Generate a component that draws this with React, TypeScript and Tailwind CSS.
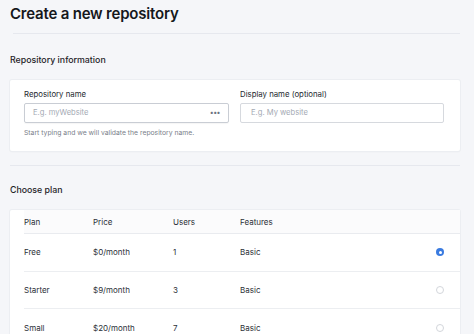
import { Fragment } from "react";

const PLANS = [
  { name: "Free", price: "$0/month", users: "1", features: "Basic", selected: true },
  { name: "Starter", price: "$9/month", users: "3", features: "Basic", selected: false },
  { name: "Small", price: "$20/month", users: "7", features: "Basic", selected: false },
];

export default function App() {
  return (
    <div
      className="min-h-[334px] w-[474px] overflow-hidden bg-[#f5f6f9] pl-[10px] pr-[14px] text-[#1f2328]"
      style={{ fontFamily: "Inter, 'Noto Sans', sans-serif" }}
    >
      <h1 className="pt-[3px] text-[15px] font-semibold leading-[22px] tracking-[-0.2px] text-[#15181c]">
        Create a new repository
      </h1>
      <div className="mt-[8px] ml-[3px] border-t border-[#e6e8ee]" />

      <h2 className="mt-[19px] text-[8.8px] font-medium leading-[14px]">Repository information</h2>

      <div className="mt-[13px] flex h-[71px] gap-[11px] rounded-[2px] bg-white pl-[14px] pr-[16px] pt-[9px] shadow-[0_0_0_1px_#eceef2,0_1px_2px_rgba(0,0,0,0.05)]">
        <div className="flex w-[205px] flex-col">
          <label className="text-[7.8px] leading-[11px] text-[#24292f]">Repository name</label>
          <div className="mt-[3px] flex h-[20px] items-center justify-between rounded-[2px] border border-[#c9cdd4] px-[8px] shadow-[0_1px_1px_rgba(0,0,0,0.04)]">
            <span className="text-[7.6px] text-[#a3a9b3]">E.g. myWebsite</span>
            <span className="text-[7px] tracking-[-0.5px] text-[#6b7280]">•••</span>
          </div>
          <p className="mt-[4.5px] text-[6.8px] leading-[10px] text-[#7a808a]">
            Start typing and we will validate the repository name.
          </p>
        </div>
        <div className="flex flex-1 flex-col">
          <label className="text-[7.8px] leading-[11px] text-[#24292f]">Display name (optional)</label>
          <div className="mt-[3px] flex h-[20px] items-center rounded-[2px] border border-[#d6d9de] px-[10px]">
            <span className="text-[7.6px] text-[#a3a9b3]">E.g. My website</span>
          </div>
        </div>
      </div>

      <div className="mt-[14px] border-t border-[#e6e8ee]" />

      <h2 className="mt-[17px] text-[8.8px] font-medium leading-[14px]">Choose plan</h2>

      <div className="mt-[13px] rounded-t-[2px] bg-white shadow-[0_0_0_1px_#eceef2]">
        <div className="grid grid-cols-[69px_80px_67px_1fr_24px] pl-[14px]">
          {["Plan", "Price", "Users", "Features", ""].map((h, i) => (
            <div
              key={i}
              className="flex h-[24px] items-center border-b border-[#e9ebef] bg-[#fbfbfc] text-[8px] text-[#2b3037]"
            >
              {h}
            </div>
          ))}
          {PLANS.map((p, idx) => (
            <Fragment key={p.name}>
              {[p.name, p.price, p.users, p.features].map((c, i) => (
                <div
                  key={i}
                  className={`flex h-[37.5px] items-center text-[8px] text-[#2b3037] ${
                    idx < PLANS.length - 1 ? "border-b border-[#eceef1]" : ""
                  }`}
                >
                  {c}
                </div>
              ))}
              <div
                className={`flex h-[37.5px] items-center ${
                  idx < PLANS.length - 1 ? "border-b border-[#eceef1]" : ""
                }`}
              >
                {p.selected ? (
                  <span className="flex h-[8px] w-[8px] items-center justify-center rounded-full bg-[#3a7be0]">
                    <span className="h-[3px] w-[3px] rounded-full bg-white" />
                  </span>
                ) : (
                  <span className="h-[8px] w-[8px] rounded-full border border-[#d3d6db] bg-white" />
                )}
              </div>
            </Fragment>
          ))}
        </div>
      </div>
    </div>
  );
}
